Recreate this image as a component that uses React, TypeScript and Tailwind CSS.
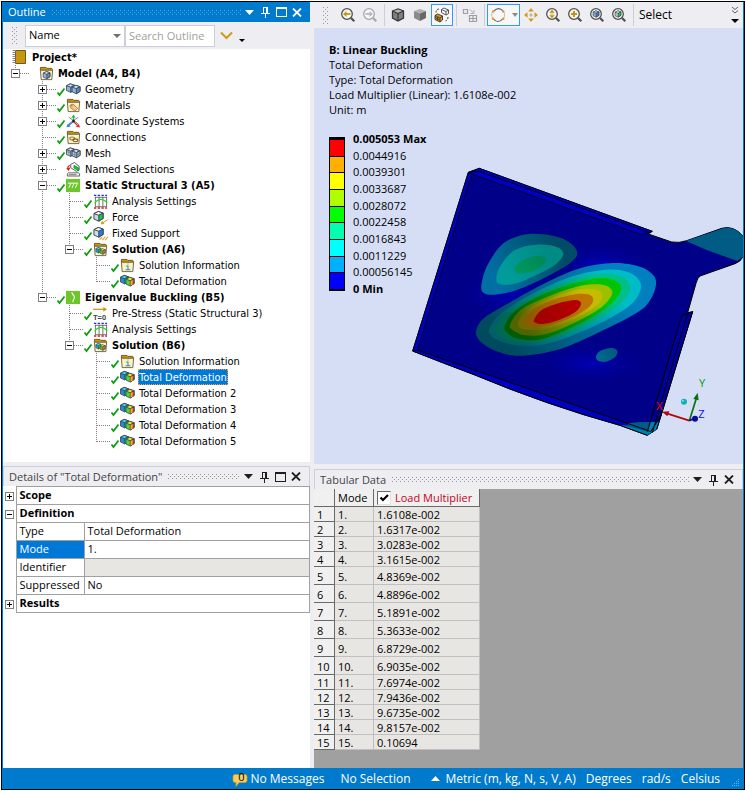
import { useState, type ReactNode } from "react";
import clsx from "clsx";

type IconName =
  | "model"
  | "geometry"
  | "materials"
  | "axes"
  | "connections"
  | "mesh"
  | "named"
  | "static"
  | "settings"
  | "force"
  | "support"
  | "solution"
  | "info"
  | "result"
  | "buckling"
  | "prestress";

type TreeNode = {
  id: string;
  label: string;
  icon: IconName;
  checked?: boolean;
  bold?: boolean;
  expander?: "plus" | "minus";
  children?: TreeNode[];
};

const tree: TreeNode = {
  id: "model",
  label: "Model (A4, B4)",
  icon: "model",
  bold: true,
  expander: "minus",
  children: [
    { id: "geometry", label: "Geometry", icon: "geometry", checked: true, expander: "plus" },
    { id: "materials", label: "Materials", icon: "materials", checked: true, expander: "plus" },
    { id: "coords", label: "Coordinate Systems", icon: "axes", checked: true, expander: "plus" },
    { id: "connections", label: "Connections", icon: "connections", checked: true },
    { id: "mesh", label: "Mesh", icon: "mesh", checked: true, expander: "plus" },
    { id: "named", label: "Named Selections", icon: "named", expander: "plus" },
    {
      id: "static",
      label: "Static Structural 3 (A5)",
      icon: "static",
      checked: true,
      bold: true,
      expander: "minus",
      children: [
        { id: "a-settings", label: "Analysis Settings", icon: "settings", checked: true },
        { id: "force", label: "Force", icon: "force", checked: true },
        { id: "support", label: "Fixed Support", icon: "support", checked: true },
        {
          id: "a6",
          label: "Solution (A6)",
          icon: "solution",
          checked: true,
          bold: true,
          expander: "minus",
          children: [
            { id: "a6-info", label: "Solution Information", icon: "info", checked: true },
            { id: "a6-td", label: "Total Deformation", icon: "result", checked: true },
          ],
        },
      ],
    },
    {
      id: "buckling",
      label: "Eigenvalue Buckling (B5)",
      icon: "buckling",
      checked: true,
      bold: true,
      expander: "minus",
      children: [
        { id: "prestress", label: "Pre-Stress (Static Structural 3)", icon: "prestress", checked: true },
        { id: "b-settings", label: "Analysis Settings", icon: "settings", checked: true },
        {
          id: "b6",
          label: "Solution (B6)",
          icon: "solution",
          checked: true,
          bold: true,
          expander: "minus",
          children: [
            { id: "b6-info", label: "Solution Information", icon: "info", checked: true },
            { id: "td1", label: "Total Deformation", icon: "result", checked: true },
            { id: "td2", label: "Total Deformation 2", icon: "result", checked: true },
            { id: "td3", label: "Total Deformation 3", icon: "result", checked: true },
            { id: "td4", label: "Total Deformation 4", icon: "result", checked: true },
            { id: "td5", label: "Total Deformation 5", icon: "result", checked: true },
          ],
        },
      ],
    },
  ],
};

const modes = [
  { value: "1.6108e-002" },
  { value: "1.6317e-002" },
  { value: "3.0283e-002" },
  { value: "3.1615e-002" },
  { value: "4.8369e-002", tall: true },
  { value: "4.8896e-002", tall: true },
  { value: "5.1891e-002", tall: true },
  { value: "5.3633e-002", tall: true },
  { value: "6.8729e-002", tall: true },
  { value: "6.9035e-002", tall: true },
  { value: "7.6974e-002" },
  { value: "7.9436e-002" },
  { value: "9.6735e-002" },
  { value: "9.8157e-002" },
  { value: "0.10694" },
];

const legendLabels = [
  "0.005053 Max",
  "0.0044916",
  "0.0039301",
  "0.0033687",
  "0.0028072",
  "0.0022458",
  "0.0016843",
  "0.0011229",
  "0.00056145",
  "0 Min",
];

const legendColors = [
  "bg-[#ff0000]",
  "bg-[#ffb000]",
  "bg-[#ffff00]",
  "bg-[#b0ff00]",
  "bg-[#00ff00]",
  "bg-[#00ffb0]",
  "bg-[#00ffff]",
  "bg-[#00b0ff]",
  "bg-[#0000ff]",
];

/* ---------- small drawings ---------- */

function Dots({ light }: { light?: boolean }) {
  return (
    <svg className="h-[5px] min-w-0 flex-1" aria-hidden="true" shapeRendering="crispEdges">
      <defs>
        <pattern id="dots" width="4" height="4" patternUnits="userSpaceOnUse">
          <rect width="1" height="1" fill="#999999" />
          <rect x="2" y="2" width="1" height="1" fill="#999999" />
        </pattern>
        <pattern id="dots-light" width="4" height="4" patternUnits="userSpaceOnUse">
          <rect width="1" height="1" fill="#59a8de" />
          <rect x="2" y="2" width="1" height="1" fill="#59a8de" />
        </pattern>
      </defs>
      <rect width="100%" height="5" fill={light ? "url(#dots-light)" : "url(#dots)"} />
    </svg>
  );
}

function Grip() {
  return (
    <svg width="6" height="17" className="shrink-0" aria-hidden="true" shapeRendering="crispEdges">
      <rect width="6" height="17" fill="url(#dots)" />
    </svg>
  );
}

function Box({ sign }: { sign: "plus" | "minus" }) {
  return (
    <g shapeRendering="crispEdges">
      <rect x="0.5" y="4.5" width="8" height="8" fill="#fff" stroke="#808080" />
      <path d={sign === "plus" ? "M2 8.5h5M4.5 6v5" : "M2 8.5h5"} stroke="#000" />
    </g>
  );
}

function FolderBack() {
  return (
    <>
      <path d="M1.5 4.5v-3h6l1 1h5l1 1.5v1z" fill="#c8960c" stroke="#6b5a1e" />
      <path d="M1.5 4.5h13l-.8 10h-11.400z" fill="#fff3bd" stroke="#6b6346" />
    </>
  );
}

function MiniCube({ x, y, s, top, left, right }: { x: number; y: number; s: number; top: string; left: string; right: string }) {
  return (
    <g transform={`translate(${x} ${y}) scale(${s})`} stroke="#3a4654" strokeWidth="0.9" strokeLinejoin="round">
      <path d="M0 2.500 4 .5l4.500 1.500v5L4.500 9.500 0 7.500z" fill={left} />
      <path d="M0 2.500 4 .5l4.500 1.500-4 2z" fill={top} />
      <path d="M4.500 4l4-2v5l-4 2.500z" fill={right} />
    </g>
  );
}

const icons: Record<IconName, ReactNode> = {
  model: (
    <>
      <FolderBack />
      <MiniCube x={4.5} y={5.5} s={0.85} top="#c9def5" left="#8fb4e0" right="#5b87bd" />
    </>
  ),
  geometry: (
    <>
      <MiniCube x={0.5} y={1.5} s={1} top="#cfe0f2" left="#90b4dc" right="#6a94c6" />
      <MiniCube x={6.5} y={3} s={1} top="#cfe0f2" left="#8cb4e4" right="#5a86bb" />
    </>
  ),
  materials: (
    <>
      <FolderBack />
      <path d="M4.500 7.500l3-1 5 4.500-3 3-5-4z" fill="#f4c58e" stroke="#a36a35" strokeWidth="0.8" />
      <circle cx="6.300" cy="8.300" r=".7" fill="#7a4a20" />
    </>
  ),
  axes: (
    <>
      <path d="M3 3.500l10 7M13 3.500l-10 7" stroke="#666" strokeWidth="0.9" />
      <path d="M8 8V3" stroke="#12c23a" strokeWidth="1.200" />
      <path d="M8 .5L5.800 4h4.400z" fill="#12c23a" />
      <path d="M8 8l-5 4" stroke="#2a7fe0" strokeWidth="1.200" />
      <path d="M.5 14l1.500-4 3 3.200z" fill="#2a7fe0" />
      <path d="M8 8l4 4" stroke="#e8262d" strokeWidth="1.200" />
      <path d="M15 14.500l-4.500-1 3-3.200z" fill="#e8262d" />
      <circle cx="8" cy="7.500" r="1.500" fill="#222" />
    </>
  ),
  connections: (
    <>
      <FolderBack />
      <ellipse cx="6.500" cy="9" rx="2.500" ry="1.500" fill="none" stroke="#8a7a4a" strokeWidth="1.200" />
      <ellipse cx="10" cy="11" rx="2.500" ry="1.500" fill="none" stroke="#6b5a2a" strokeWidth="1.200" />
    </>
  ),
  mesh: (
    <>
      <MiniCube x={0.5} y={1.5} s={1} top="#d8e2ee" left="#b7c8dd" right="#9db2cc" />
      <MiniCube x={6.5} y={3} s={1} top="#d8e2ee" left="#b7c8dd" right="#9db2cc" />
      <path d="M3 3v6M9 5.500v6M12.500 4.500v6M1 6l4 1.500M7 8.500l4 1.500 4-2" stroke="#5f7085" strokeWidth="0.6" fill="none" />
    </>
  ),
  named: (
    <>
      <path d="M5 2.500 9 .5l5 4v4l-3 1.500-6-4z" fill="#fff" stroke="#444" strokeWidth="0.9" />
      <path d="M8.500 3.500l5 3v3l-5-3z" fill="#10d030" stroke="#084" strokeWidth="0.8" />
      <path d="M4 3.500c-2 1-2.500 2.500-1.500 4.500M.8 6.500l1.900 2 1.300-2.500" stroke="#e01b1b" strokeWidth="1.200" fill="none" />
      <path d="M2.500 11.500h11l1 1v2.500h-13v-2.500z" fill="#eee" stroke="#555" strokeWidth="0.9" />
      <path d="M3 13.500h8" stroke="#555" strokeWidth="0.8" />
    </>
  ),
  static: (
    <>
      <rect width="15" height="14" y="1" fill="#6fc52c" />
      <path d="M2 5.500h11M5 6l-2 4.500M8.500 6l-2 4.500M12 6l-2 4.500" stroke="#fff" fill="none" />
    </>
  ),
  settings: (
    <>
      <path d="M2.500 3v10M6.500 3v10M10.500 3v10M14.500 3v10M2 3.500h13M2 13.500h13" stroke="#444" strokeWidth="0.8" />
      <path d="M2 10c3-5.500 10-5.500 13 0" stroke="#18d418" fill="none" strokeWidth="1.300" />
      <path d="M1 1.500h14" stroke="#1c2ee0" strokeWidth="1.500" strokeDasharray="2.500 1.500" />
      <path d="M1 15h14" stroke="#e01515" strokeWidth="1.500" strokeDasharray="2.500 1.500" />
    </>
  ),
  force: (
    <>
      <MiniCube x={1} y={1} s={1.15} top="#f4f8fb" left="#cdd8e2" right="#10cc40" />
      <path d="M15.500 10.500L9 14.500M9 14.800l.8-2.600 1.800 2.300z" stroke="#d9981b" fill="#d9981b" />
    </>
  ),
  support: (
    <>
      <MiniCube x={1} y={1} s={1.15} top="#f4f8fb" left="#d5dee6" right="#1d80e8" />
      <path d="M7 14.500l3-3M10 15l3-3.500M13 15l3-3.500" stroke="#d9981b" strokeWidth="1.100" />
    </>
  ),
  solution: (
    <>
      <FolderBack />
      <MiniCube x={3} y={5.5} s={0.65} top="#5fd6e8" left="#1d9bd8" right="#28c860" />
      <MiniCube x={7.5} y={7} s={0.65} top="#e8e428" left="#4ac840" right="#f07020" />
    </>
  ),
  info: (
    <>
      <FolderBack />
      <path d="M6.500 8.500h2v4M6 12.500h5M8 6.500h1" stroke="#2a8ad8" strokeWidth="1.100" fill="none" />
    </>
  ),
  result: (
    <>
      <MiniCube x={0.5} y={1} s={1} top="#40d8e8" left="#1d90d8" right="#20c8b0" />
      <MiniCube x={6.3} y={3} s={1.03} top="#f4e828" left="#50d838" right="#f04818" />
      <path d="M11.300 7.500l2-1v5l-2 1z" fill="#f4b020" />
    </>
  ),
  buckling: (
    <>
      <rect width="15" height="14" y="1" fill="#6fc52c" />
      <path d="M6.500 2.500c-1 2 3 3 2.500 5.500s-2 2.500-1.500 5" stroke="#fff" strokeWidth="1.200" fill="none" />
    </>
  ),
  prestress: (
    <>
      <path d="M0 3.500h12" stroke="#c8960c" strokeWidth="1.300" />
      <path d="M15 3.500L11 1v5z" fill="#c8960c" />
      <text x="0" y="15" fontSize="8" fontWeight="bold" fill="#444" fontFamily="Liberation Sans, sans-serif">
        T=0
      </text>
    </>
  ),
};

/* ---------- panel chrome ---------- */

function TitleBar({ title, active, square = true }: { title: string; active?: boolean; square?: boolean }) {
  return (
    <header
      className={clsx(
        "flex h-5 shrink-0 items-center pr-[7px] pl-[5px] text-[11px]",
        active ? "bg-[#007acc] text-white" : "border border-b-0 border-[#ccceda] bg-[#eeeef2] text-[#444444]",
      )}
    >
      <h2 className="mr-1.5 leading-4 whitespace-nowrap">{title}</h2>
      <Dots light={active} />
      <div className={clsx("flex items-center gap-1", active ? "text-white" : "text-[#1e1e1e]")}>
        <button type="button" aria-label="Window position" className="ml-0.5 flex size-3 items-center justify-center">
          <svg width="9" height="5">
            <path d="M0 0h9L4.500 5z" fill="currentColor" />
          </svg>
        </button>
        <button type="button" aria-label="Auto hide" className="flex size-3 items-center justify-center">
          <svg width="9" height="12" fill="none" stroke="currentColor" shapeRendering="crispEdges">
            <path d="M2.500 7V1.500h4V7M5.500 1v6M0 7.500h9M4.500 8v4" />
          </svg>
        </button>
        {square && (
          <button type="button" aria-label="Maximize" className="flex size-3 items-center justify-center">
            <svg width="11" height="10" fill="none" stroke="currentColor" shapeRendering="crispEdges">
              <path d="M.5 1v8.500h10V1M0 1.500h11M0 .5h11" />
            </svg>
          </button>
        )}
        <button type="button" aria-label="Close" className="flex size-3 items-center justify-center">
          <svg width="10" height="9" fill="none" stroke="currentColor" strokeWidth="1.800">
            <path d="M1 .5l8 8M9 .5l-8 8" />
          </svg>
        </button>
      </div>
    </header>
  );
}

/* ---------- outline ---------- */

function Branch({ node, trail, last, selected, onSelect }: { node: TreeNode; trail: boolean[]; last: boolean; selected: string; onSelect: (id: string) => void }) {
  return (
    <li>
      <div className="flex h-4 items-center">
        {trail.map((open, i) => (
          <svg key={i} width="27" height="16" className="shrink-0" shapeRendering="crispEdges">
            {open && <path d="M4.500 0v16" stroke="#808080" strokeDasharray="1 1" />}
          </svg>
        ))}
        <svg width="27" height="16" className="relative shrink-0 overflow-visible">
          <g shapeRendering="crispEdges">
            <path d={last ? "M4.500 0v9" : "M4.500 0v16"} stroke="#808080" strokeDasharray="1 1" />
            <path d="M5 8.500h14" stroke="#808080" strokeDasharray="1 1" />
          </g>
          {node.expander && <Box sign={node.expander} />}
          {node.checked && <path d="M19.500 11.500l2 2.500 5-6.500" fill="none" stroke="#0a9a0a" strokeWidth="1.700" />}
        </svg>
        <svg viewBox="0 0 16 16" className="ml-px size-[15px] shrink-0" fill="none">
          {icons[node.icon]}
        </svg>
        <button
          type="button"
          onClick={() => onSelect(node.id)}
          className={clsx(
            "ml-[3px] h-4 px-px leading-[18px] whitespace-nowrap",
            node.bold && "font-bold",
            selected === node.id && "bg-[#0078d7] text-white outline outline-1 -outline-offset-1 outline-dotted outline-[#ff9a3c]",
          )}
        >
          {node.label}
        </button>
      </div>
      {node.children && (
        <ul>
          {node.children.map((child, i) => (
            <Branch
              key={child.id}
              node={child}
              trail={[...trail, !last]}
              last={i === node.children!.length - 1}
              selected={selected}
              onSelect={onSelect}
            />
          ))}
        </ul>
      )}
    </li>
  );
}

function Outline() {
  const [selected, setSelected] = useState("td1");
  return (
    <section className="flex flex-col">
      <TitleBar title="Outline" active />
      <div className="flex h-[27px] items-center bg-[#eeeef2] pl-[9px] text-[11px]">
        <Grip />
        <div className="relative ml-[7px]">
          <select aria-label="Filter by" className="h-[22px] w-[100px] appearance-none border border-[#ccceda] bg-white px-[3px]">
            <option>Name</option>
          </select>
          <svg width="8" height="4" className="pointer-events-none absolute top-[9px] right-[4px]">
            <path d="M0 0h8L4 4z" fill="#717171" />
          </svg>
        </div>
        <input
          aria-label="Search Outline"
          placeholder="Search Outline"
          className="h-[22px] w-[90px] border border-[#ccceda] bg-white px-[3px] placeholder:text-[#a0a0a0]"
        />
        <button type="button" aria-label="Expand filters" className="ml-[5px]">
          <svg width="13" height="9" fill="none" stroke="#cf9b17" strokeWidth="2">
            <path d="M1 1.500l5.500 5.500L12 1.500" />
          </svg>
        </button>
        <button type="button" aria-label="Toolbar options" className="mt-2.5 ml-1.5">
          <svg width="6" height="3">
            <path d="M0 0h6L3 3z" fill="#000" />
          </svg>
        </button>
      </div>
      <div className="bg-white pb-[13px] pl-2 text-[11px] font-['DejaVu_Sans_Condensed','Open_Sans',sans-serif]">
        <div className="flex h-4 items-center">
          <svg width="16" height="16" className="shrink-0">
            <path d="M4.500 1.500h10v13h-10z" fill="#c8960c" stroke="#6b5a1e" />
            <path d="M3 1v14" stroke="#888" strokeWidth="3" strokeDasharray="1 1" />
          </svg>
          <span className="ml-[5px] h-4 leading-[18px] font-bold">Project*</span>
        </div>
        <ul>
          <Branch node={tree} trail={[]} last selected={selected} onSelect={setSelected} />
        </ul>
      </div>
    </section>
  );
}

/* ---------- details ---------- */

const details = [
  { section: "Scope", sign: "plus" as const },
  { section: "Definition", sign: "minus" as const },
  { name: "Type", value: "Total Deformation" },
  { name: "Mode", value: "1.", active: true },
  { name: "Identifier", value: "", disabled: true },
  { name: "Suppressed", value: "No" },
  { section: "Results", sign: "plus" as const },
];

function Details() {
  return (
    <section className="flex flex-1 flex-col bg-white">
      <TitleBar title={'Details of "Total Deformation"'} />
      <table className="w-full table-fixed border-collapse text-[11px] leading-[14px]">
        <colgroup>
          <col className="w-[13px]" />
          <col className="w-[68px]" />
          <col />
        </colgroup>
        <tbody>
          {details.map((row) => (
            <tr key={row.section ?? row.name} className="h-[18px]">
              <td className="p-0">
                {row.sign && (
                  <button type="button" aria-label={`Toggle ${row.section}`} className="block pl-0.5">
                    <svg width="9" height="16">
                      <Box sign={row.sign} />
                    </svg>
                  </button>
                )}
              </td>
              {row.section ? (
                <th colSpan={2} className="border border-[#a0a0a0] px-[3px] pt-0 pb-0.5 text-left font-bold">
                  {row.section}
                </th>
              ) : (
                <>
                  <th
                    className={clsx(
                      "border border-[#a0a0a0] px-[3px] pt-0 pb-0.5 text-left font-normal",
                      row.active && "bg-[#0078d7] text-white",
                    )}
                  >
                    {row.name}
                  </th>
                  <td className={clsx("border border-[#a0a0a0] px-[3px] pt-0 pb-0.5", row.disabled && "bg-[#e8e6e2]")}>{row.value}</td>
                </>
              )}
            </tr>
          ))}
        </tbody>
      </table>
    </section>
  );
}

/* ---------- graphics toolbar ---------- */

function ToolButton({ label, toggled, children }: { label: string; toggled?: boolean; children: ReactNode }) {
  return (
    <button
      type="button"
      aria-label={label}
      className={clsx("flex size-[22px] shrink-0 items-center justify-center", toggled && "border border-[#3399ff] bg-[#f7f7f9]")}
    >
      <svg width="16" height="16" viewBox="0 0 16 16" className="shrink-0" fill="none">
        {children}
      </svg>
    </button>
  );
}

function Separator() {
  return (
    <div className="flex w-1.5 shrink-0 justify-center">
      <div className="h-[22px] w-px bg-[#ccceda]" />
    </div>
  );
}

function Lens({ color = "#505050" }: { color?: string }) {
  return (
    <>
      <circle cx="7" cy="7" r="5.300" fill="#f8f8fa" stroke={color} strokeWidth="1.300" />
      <path d="M11 11l3.300 3.300" stroke={color} strokeWidth="2.200" />
    </>
  );
}

function GraphicsToolbar() {
  return (
    <div className="flex h-[26px] shrink-0 items-center overflow-hidden bg-[#eeeef2] pl-[9px] text-xs">
      <Grip />
      <div className="w-2 shrink-0" />
      <ToolButton label="Previous view">
        <Lens />
        <path d="M5 7h5.500" stroke="#c8960c" strokeWidth="1.800" />
        <path d="M3 7l3.500-3v6z" fill="#c8960c" />
      </ToolButton>
      <ToolButton label="Next view">
        <Lens color="#a8a8a8" />
        <path d="M3.500 7H9" stroke="#b8b8b8" strokeWidth="1.800" />
        <path d="M11 7L7.500 4v6z" fill="#b8b8b8" />
      </ToolButton>
      <Separator />
      <ToolButton label="Shaded with edges">
        <path d="M2.500 4l5.500-2 5.500 2v7L8 14l-5.500-3z" fill="#808080" stroke="#383838" strokeWidth="1.300" />
        <path d="M2.500 4L8 6.500 13.500 4M8 6.500V14" stroke="#383838" strokeWidth="1.200" />
        <path d="M4 3.900l4-1.300 4 1.300-4 1.800z" fill="#b4b4b4" />
      </ToolButton>
      <ToolButton label="Shaded">
        <path d="M2 4l6-2 6 2-6 2.500z" fill="#b0b0b0" />
        <path d="M2 4l6 2.500V14l-6-3z" fill="#8a8a8a" />
        <path d="M14 4L8 6.500V14l6-3z" fill="#686868" />
      </ToolButton>
      <ToolButton label="Show mesh" toggled>
        <path d="M1 8.500l2.500-1.500 5 2v4L6 15l-5-2.500z" fill="#d9981b" stroke="#333" strokeWidth="0.9" />
        <path d="M1 8.500l5 2.500v4M6 11l2.500-2M3.500 10v3.500M1 10.500l5 2.500" stroke="#333" strokeWidth="0.8" />
        <path d="M7.500 2.500L10 1l4.500 2v3.500L12 8 7.500 5.500z" fill="#fff" stroke="#444" strokeWidth="0.9" />
        <path d="M7.500 2.500L12 4.500V8M12 4.500L14.500 3" stroke="#444" strokeWidth="0.9" />
        <path d="M2 5.500c0-2 1-3.500 3-3.500M14 10c0 2-1 3.500-2.500 4" stroke="#444" strokeDasharray="2 1" />
      </ToolButton>
      <Separator />
      <ToolButton label="Explode view">
        <path d="M1.500 2.500h4v4h-4zM7.500 8.500h7v6h-7zM11 8.500v6M7.500 11.500h7" stroke="#a0a0a0" strokeWidth="1.200" />
        <path d="M8 2.500l3.500 3.500M12 3v3.500H8.500" stroke="#b0b0b0" />
      </ToolButton>
      <Separator />
      <div className="flex h-[22px] w-[33px] shrink-0 items-center border border-[#3399ff] bg-[#f7f7f9]">
        <button type="button" aria-label="Rotate" className="ml-0.5">
          <svg width="16" height="16" fill="none">
            <path d="M4 4c2.500-3.300 6.500-3.300 9 0M12.500 12c-2.500 3.300-6.500 3.300-9 0" stroke="#606060" strokeWidth="1.200" />
            <path d="M2.500 5c-1.200 2-1.200 4 0 6M13.800 5c1.200 2 1.200 4 0 6" stroke="#b0b0b0" strokeWidth="0.8" />
            <circle cx="3.200" cy="4.500" r="1.200" fill="#e0a020" />
            <circle cx="13.300" cy="4.500" r="1.200" fill="#e0a020" />
            <circle cx="3" cy="11.800" r="1.200" fill="#e0a020" />
            <circle cx="13.300" cy="11.800" r="1.200" fill="#e0a020" />
          </svg>
        </button>
        <button type="button" aria-label="Rotate options" className="ml-1.5">
          <svg width="6" height="4" className="block">
            <path d="M0 0h6L3 4z" fill="#8a8a8a" />
          </svg>
        </button>
      </div>
      <ToolButton label="Pan">
        <path d="M8 1l2.800 3.500H5.200zM8 15l2.800-3.500H5.200zM1 8l3.500-2.800v5.600zM15 8l-3.500-2.800v5.600z" fill="#cf9b17" />
        <path d="M7 6.500h2v3H7zM6.500 7h3v2h-3z" fill="#b8b8b8" />
      </ToolButton>
      <ToolButton label="Zoom">
        <Lens />
        <path d="M7 3l2.200 2.500H4.800zM7 11l2.200-2.500H4.800zM5 7h4" fill="#c8960c" stroke="#c8960c" strokeWidth="0.6" />
      </ToolButton>
      <ToolButton label="Box zoom">
        <Lens />
        <path d="M7 4v6M4 7h6" stroke="#c8960c" strokeWidth="2" />
      </ToolButton>
      <ToolButton label="Zoom to fit">
        <Lens />
        <MiniCube x={4} y={3.5} s={0.7} top="#b8d0ec" left="#88aad8" right="#4a78b4" />
      </ToolButton>
      <ToolButton label="Zoom to selection">
        <Lens />
        <MiniCube x={4} y={3.5} s={0.7} top="#f0f0f0" left="#b8c8c0" right="#10cc30" />
      </ToolButton>
      <Separator />
      <button type="button" className="ml-[3px]">
        Select
      </button>
      <button type="button" aria-label="More tools" className="mr-1 ml-auto">
        <svg width="8" height="18" fill="none">
          <path d="M1 1l3 2.500L7 1M1 4.500L4 7l3-2.500" stroke="#606060" />
          <path d="M0 13h8l-4 4z" fill="#000" />
        </svg>
      </button>
    </div>
  );
}

/* ---------- contour plot ---------- */

type Point = [number, number];

// closed Catmull-Rom curve through the points
function smooth(points: Point[]) {
  const n = points.length;
  let d = `M${points[0][0]} ${points[0][1]}`;
  for (let i = 0; i < n; i++) {
    const p0 = points[(i + n - 1) % n];
    const p1 = points[i];
    const p2 = points[(i + 1) % n];
    const p3 = points[(i + 2) % n];
    d += `C${p1[0] + (p2[0] - p0[0]) / 6} ${p1[1] + (p2[1] - p0[1]) / 6} ${p2[0] - (p3[0] - p1[0]) / 6} ${p2[1] - (p3[1] - p1[1]) / 6} ${p2[0]} ${p2[1]}`;
  }
  return d + "Z";
}

const contours: { from: string; to: string; points: Point[] }[] = [
  { from: "#006fa4", to: "#004c66", points: [[247, 425], [248, 385], [268, 335], [310, 280], [370, 254], [430, 253], [495, 269], [531, 303], [515, 335], [440, 380], [350, 420], [285, 434]] },
  { from: "#009c9c", to: "#008a84", points: [[289, 385], [303, 345], [345, 300], [410, 284], [470, 291], [490, 312], [468, 342], [420, 370], [350, 400], [300, 403]] },
  { from: "#00965c", to: "#008a58", points: [[343, 358], [360, 335], [405, 318], [438, 324], [430, 345], [395, 365], [358, 370]] },
  { from: "#004a60", to: "#0080c0", points: [[229, 540], [250, 506], [320, 463], [430, 402], [540, 355], [640, 339], [720, 350], [762, 378], [766, 415], [740, 465], [690, 500], [600, 545], [500, 590], [420, 611], [345, 617], [290, 604], [250, 582], [231, 560]] },
  { from: "#006066", to: "#00bcc8", points: [[268, 538], [300, 493], [400, 430], [520, 378], [620, 359], [685, 367], [720, 395], [718, 430], [685, 470], [600, 520], [500, 563], [415, 586], [340, 584], [292, 570], [272, 554]] },
  { from: "#006a50", to: "#00c088", points: [[291, 535], [320, 490], [410, 434], [530, 384], [615, 371], [670, 382], [690, 408], [680, 440], [640, 478], [530, 540], [430, 574], [350, 576], [303, 560]] },
  { from: "#005c00", to: "#00c400", points: [[314, 528], [345, 483], [430, 432], [540, 395], [610, 385], [652, 396], [663, 418], [640, 455], [580, 500], [480, 548], [410, 570], [350, 565], [320, 547]] },
  { from: "#506400", to: "#9cc000", points: [[331, 522], [365, 478], [440, 441], [530, 410], [595, 403], [630, 414], [635, 436], [600, 475], [520, 520], [440, 552], [375, 556], [338, 540]] },
  { from: "#706800", to: "#c4bc00", points: [[354, 517], [390, 473], [460, 441], [540, 418], [592, 420], [607, 440], [580, 475], [500, 517], [430, 538], [370, 538]] },
  { from: "#905800", to: "#c07400", points: [[374, 512], [405, 474], [480, 443], [545, 431], [577, 440], [573, 465], [530, 495], [460, 522], [405, 530], [380, 524]] },
  { from: "#a00000", to: "#b40000", points: [[402, 510], [425, 480], [485, 457], [530, 450], [543, 463], [525, 487], [475, 511], [430, 522], [407, 518]] },
  { from: "#006a90", to: "#005c80", points: [[588, 620], [600, 603], [635, 594], [652, 603], [645, 622], [618, 635], [595, 632]] },
];

function Plate() {
  return (
    <svg
      viewBox="-258 -366 1287 1308"
      preserveAspectRatio="xMaxYMin meet"
      className="pointer-events-none absolute inset-0 size-full"
      role="img"
      aria-label="Total deformation contour plot"
    >
      <defs>
        {contours.map((c, i) => (
          <linearGradient key={i} id={`contour-${i}`} x1="0" y1="0.700" x2="1" y2="0.300">
            <stop offset="0.100" stopColor={c.from} />
            <stop offset="0.850" stopColor={c.to} />
          </linearGradient>
        ))}
        <radialGradient id="glow">
          <stop offset="0" stopColor="#0000b4" />
          <stop offset="1" stopColor="#000088" stopOpacity="0" />
        </radialGradient>
      </defs>
      <g stroke="#000" strokeWidth="3" strokeLinejoin="round">
        <path
          d="M205 67L238 55 757 244 745 252 815 276Q838 280 860 272L965 235Q1000 225 1029 258V320Q1022 335 1005 341L900 378Q892 384 888 400L863 488 878 485 784 795 770 838 742 856 660 826Q440 765 225 675L38 603Z"
          fill="#000088"
        />
        <g stroke="none">
          <ellipse cx="330" cy="430" rx="180" ry="90" fill="url(#glow)" />
          <ellipse cx="600" cy="340" rx="190" ry="70" fill="url(#glow)" />
          <ellipse cx="570" cy="640" rx="200" ry="70" fill="url(#glow)" />
          <path d="M858 273L965 236Q1000 226 1029 258V320L1012 333 920 300Z" fill="#005c84" />
          <path d="M660 826L685 820 775 815 784 800 770 838 742 856Z" fill="#0080b8" />
          <path d="M665 824Q700 814 752 816L744 845Z" fill="#005c84" />
        </g>
        <path d="M205 67L238 55 757 244 725 254 215 72Z" fill="#0000c4" strokeWidth="2" />
        <path d="M212 66L238 64 745 246" fill="none" />
        <path d="M205 67L215 72 52 601 38 603Z" fill="#0000b8" strokeWidth="2" />
        <path d="M38 603L60 602 663 815 690 826 660 826Q440 765 225 675Z" fill="#0000c0" stroke="none" />
        <path d="M52 600L742 841 752 845 784 795M38 603Q130 640 225 675 440 765 660 826L742 856" fill="none" />
        <path d="M845 497L878 485 784 790 760 815Z" fill="#0000a0" stroke="none" />
        <path d="M845 497L742 845M845 497L878 485M862 493L757 848M878 485L770 838" fill="none" />
      </g>
      {contours.map((c, i) => (
        <path key={i} d={smooth(c.points)} fill={`url(#contour-${i})`} />
      ))}
      <g strokeWidth="5">
        <path d="M868 812L889 745" stroke="#0a7010" />
        <path d="M893 728L880 747 896 751Z" fill="#0a7010" />
        <path d="M868 812L800 790" stroke="#b00808" />
        <path d="M786 785L808 784 802 799Z" fill="#b00808" />
        <path d="M868 812L880 806" stroke="#0808a0" />
        <circle cx="885" cy="806" r="9" fill="#0808a0" />
        <circle cx="852" cy="755" r="9" fill="#10b0b8" />
        <circle cx="849" cy="752" r="3" fill="#70e8e8" />
      </g>
      <g fontSize="33" fontFamily="Open Sans, sans-serif">
        <text x="897" y="711" fill="#00a000">
          Y
        </text>
        <text x="769" y="779" fill="#ff0000">
          X
        </text>
        <text x="895" y="805" fill="#1010f0">
          Z
        </text>
      </g>
    </svg>
  );
}

function Viewport() {
  return (
    <section className="relative h-[436px] shrink-0 overflow-hidden bg-[#d6def6] pt-3.5 pl-[15px] text-[11px]">
      <Plate />
      <h1 className="leading-[15px] font-bold">B: Linear Buckling</h1>
      <p className="leading-[15px]">Total Deformation</p>
      <p className="leading-[15px]">Type: Total Deformation</p>
      <p className="leading-[15px]">Load Multiplier (Linear): 1.6108e-002</p>
      <p className="leading-[15px]">Unit: m</p>
      <div className="mt-3.5 flex h-[166px] items-center gap-2">
        <div className="flex h-[154px] w-4 flex-col divide-y divide-black border border-t-[3px] border-b-2 border-black">
          {legendColors.map((c) => (
            <div key={c} className={clsx("flex-1", c)} />
          ))}
        </div>
        <ul className="flex h-full flex-col justify-between leading-4">
          {legendLabels.map((label, i) => (
            <li key={label} className={clsx((i === 0 || i === legendLabels.length - 1) && "font-bold")}>
              {label}
            </li>
          ))}
        </ul>
      </div>
    </section>
  );
}

/* ---------- tabular data ---------- */

function TabularData() {
  const [shown, setShown] = useState(true);
  return (
    <section className="flex flex-1 flex-col bg-[#a0a0a0]">
      <TitleBar title="Tabular Data" square={false} />
      <table className="w-[166px] table-fixed border-separate border-spacing-0 text-[11px] leading-3">
        <colgroup>
          <col className="w-[21px]" />
          <col className="w-[39px]" />
          <col className="w-[106px]" />
        </colgroup>
        <thead>
          <tr className="h-[18px] bg-[#f0f0f0]">
            <th className="border-r border-b border-[#696969] p-0" />
            <th className="border-r border-b border-[#696969] p-0 pl-[3px] text-left font-normal">Mode</th>
            <th className="border-r border-b border-[#696969] p-0 pl-[3px] text-left font-normal">
              <label className="flex items-center gap-1 whitespace-nowrap text-[#c8001e]">
                <span className="relative">
                  <input
                    type="checkbox"
                    checked={shown}
                    onChange={(e) => setShown(e.target.checked)}
                    className="block size-3.5 appearance-none border border-t-[#696969] border-r-[#e3e3e3] border-b-[#e3e3e3] border-l-[#696969] bg-white"
                  />
                  {shown && (
                    <svg width="14" height="14" fill="none" className="pointer-events-none absolute inset-0">
                      <path d="M3.500 6.500L6 9l5-5" stroke="#000" strokeWidth="2.200" />
                    </svg>
                  )}
                </span>
                Load Multiplier
              </label>
            </th>
          </tr>
        </thead>
        <tbody>
          {modes.map((m, i) => (
            <tr key={m.value} className={clsx("bg-[#e8e6e2]", m.tall ? "h-[18px]" : "h-[15px]")}>
              <th className="border-r border-b border-[#696969] bg-[#f0f0f0] pt-0.5 pr-0 pb-0 pl-[3px] text-left font-normal">{i + 1}</th>
              <td className="border-r border-b border-[#c0c0c0] pt-0.5 pr-0 pb-0 pl-[3px]">{i + 1}.</td>
              <td className="border-r border-b border-[#c0c0c0] pt-0.5 pr-0 pb-0 pl-[3px]">{m.value}</td>
            </tr>
          ))}
        </tbody>
      </table>
    </section>
  );
}

function StatusBar() {
  return (
    <footer className="flex h-[21px] shrink-0 items-center justify-end bg-[#007acc] pr-1 text-xs whitespace-nowrap text-white">
      <button type="button" className="flex items-center gap-0.5">
        <span className="relative">
          <svg width="16" height="16" className="block">
            <path d="M1 5.500q0-2 2-2h10q2 0 2 2v4q0 2-2 2H7L4 15.500v-4H3q-2 0-2-2z" fill="#f5d060" stroke="#c89a20" strokeWidth="0.8" />
          </svg>
          <span className="absolute top-0 right-1 text-[11px] leading-3 text-black">0</span>
        </span>
        No Messages
      </button>
      <span className="ml-4">No Selection</span>
      <button type="button" className="ml-5 flex items-center gap-1.5">
        <svg width="9" height="5">
          <path d="M0 5h9L4.500 0z" fill="#fff" />
        </svg>
        Metric (m, kg, N, s, V, A)
      </button>
      <span className="ml-2.5">Degrees</span>
      <span className="ml-2.5">rad/s</span>
      <span className="ml-2.5">Celsius</span>
      <svg width="8" height="8" className="mt-2 ml-3" fill="#6cb4e4">
        <path d="M6 0h1v1H6zM4 2h1v1H4zM6 2h1v1H6zM2 4h1v1H2zM4 4h1v1H4zM6 4h1v1H6zM0 6h1v1H0zM2 6h1v1H2zM4 6h1v1H4zM6 6h1v1H6z" />
      </svg>
    </footer>
  );
}

export default function App() {
  return (
    <div className="flex min-h-screen flex-col bg-white p-px font-['Open_Sans','Noto_Sans',sans-serif] text-black">
      <div className="flex flex-1 flex-col border border-black">
        <main className="flex flex-1 gap-1 border-x border-[#007acc] bg-[#eeeef2]">
          <div className="flex w-[307px] shrink-0 flex-col gap-1">
            <Outline />
            <Details />
          </div>
          <div className="flex min-w-0 flex-1 flex-col gap-[5px]">
            <div>
              <GraphicsToolbar />
              <Viewport />
            </div>
            <TabularData />
          </div>
        </main>
        <StatusBar />
      </div>
    </div>
  );
}
